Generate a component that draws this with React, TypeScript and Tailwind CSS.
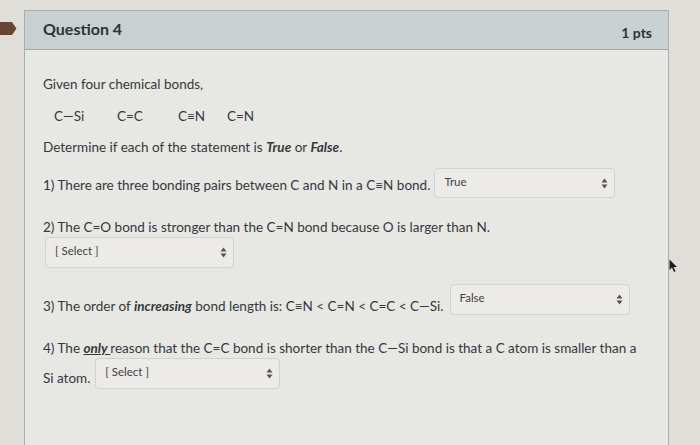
import React from "react";

const Arrows = () => (
  <svg width="7" height="11" viewBox="0 0 7 11" className="shrink-0">
    <path d="M3.5 0.5 L6.5 4.5 H0.5 Z" fill="#555" />
    <path d="M3.5 10.5 L6.5 6.5 H0.5 Z" fill="#555" />
  </svg>
);

const Select = ({ label, w, h = 30 }: { label: string; w: number; h?: number }) => (
  <div
    className="shrink-0 flex items-center justify-between rounded-[4px] border border-[#d2d2ce] bg-[#ecebe8] pl-[9px] pr-[6px]"
    style={{ width: w, height: h }}
  >
    <span className="text-[11.5px] text-[#3d4247] -mt-[3px]">{label}</span>
    <Arrows />
  </div>
);

const BI = ({ children }: { children: React.ReactNode }) => (
  <span className="font-bold italic">{children}</span>
);

export default function App() {
  return (
    <div
      className="relative w-[700px] h-[445px] overflow-hidden bg-[#dfded9] text-[#33393e]"
      style={{ fontFamily: "Lato, 'Noto Sans', sans-serif" }}
    >
      {/* left tag */}
      <svg className="absolute left-0 top-[22px]" width="17" height="13" viewBox="0 0 17 13">
        <path d="M0 0 H12 L16.5 6.5 L12 13 H0 Z" fill="#6b4431" />
      </svg>

      {/* mouse cursor */}
      <svg className="absolute left-[669px] top-[259px]" width="9" height="14" viewBox="0 0 9 14">
        <path d="M0.5 0.5 L0.5 11 L3 8.5 L5 13 L6.5 12.3 L4.6 8 L8 8 Z" fill="#1e1e1e" />
      </svg>

      <div className="ml-[24px] mt-[10px] w-[645px] h-[460px] border border-[#a9afb1] bg-[#e7e7e3]">
        {/* header */}
        <div className="h-[39px] flex items-center justify-between bg-[#c8d0d1] border-b border-[#9fa8ab] pl-[18px] pr-[16px]">
          <span className="text-[16px] font-bold text-[#2e3338] -mt-[2px]">Question 4</span>
          <span className="text-[14px] font-bold text-[#2e3338] mt-[4px]">1 pts</span>
        </div>

        {/* body */}
        <div className="pl-[18px] pr-[10px] text-[13.5px] leading-[18px]">
          <div className="mt-[25px]">Given four chemical bonds,</div>

          <div className="mt-[14px] flex pl-[11px]">
            <span className="w-[63px]">C—Si</span>
            <span className="w-[61px]">C=C</span>
            <span className="w-[49px]">C≡N</span>
            <span>C=N</span>
          </div>

          <div className="mt-[13px]">
            Determine if each of the statement is <BI>True</BI> or <BI>False</BI>.
          </div>

          <div className="mt-[12px] flex items-end h-[30px]">
            <span className="pb-[4px] mr-[4px] whitespace-nowrap">
              1) There are three bonding pairs between C and N in a C≡N bond.
            </span>
            <Select label="True" w={181} />
          </div>

          <div className="mt-[20px]">
            2) The C=O bond is stronger than the C=N bond because O is larger than N.
          </div>
          <div className="mt-[1px] ml-[2px]">
            <Select label="[ Select ]" w={189} h={31} />
          </div>

          <div className="mt-[16px] flex items-end h-[31px]">
            <span className="pb-[0px] mr-[6px] whitespace-nowrap">
              3) The order of <BI>increasing</BI> bond length is: C≡N &lt; C=N &lt; C=C &lt; C—Si.
            </span>
            <Select label="False" w={180} h={31} />
          </div>

          <div className="mt-[24px] whitespace-nowrap">
            4) The <span className="font-bold italic underline">only </span>reason that the C=C bond is shorter than the C—Si bond is that a C atom is smaller than a
          </div>
          <div className="mt-[1px] flex items-end h-[31px]">
            <span className="pb-[2px] mr-[5px]">Si atom.</span>
            <Select label="[ Select ]" w={185} h={31} />
          </div>
        </div>
      </div>
    </div>
  );
}
